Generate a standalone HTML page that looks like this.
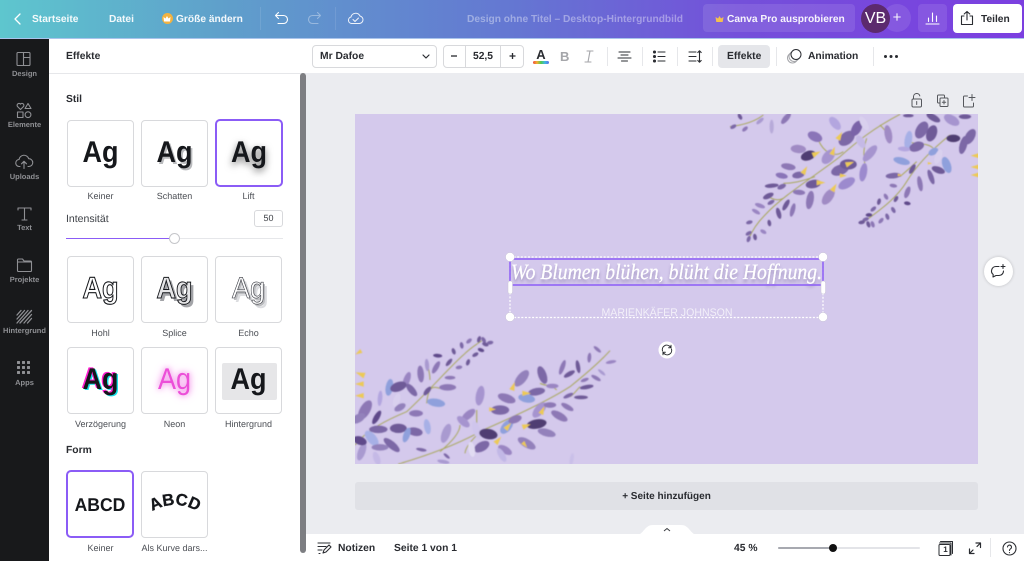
<!DOCTYPE html>
<html lang="de"><head><meta charset="utf-8"><title>Canva Editor</title>
<style>
*{box-sizing:border-box}
html,body{margin:0;padding:0;width:1024px;height:561px;overflow:hidden;background:#ebecf0;font-family:"Liberation Sans",sans-serif;color:#1b1d21;text-rendering:geometricPrecision}
body{filter:blur(.25px)}
.a{position:absolute}
.t{position:absolute;white-space:nowrap;line-height:1}
#top{left:0;top:0;width:1024px;height:39px;background:linear-gradient(90deg,#5ec6ce 0%,#5f9fcb 22%,#6477d2 50%,#7450da 72%,#7b3fe0 100%);border-bottom:1px solid #a9c4ec}
#top .t{color:#fff;font-size:10.2px;font-weight:bold;top:14.5px;opacity:.93}
#side{left:0;top:39px;width:49px;height:522px;background:#18191b}
.sl{position:absolute;left:0;width:49px;text-align:center;color:#8f9094;font-size:7.5px;line-height:9px;font-weight:bold;white-space:nowrap}
#panel{left:49px;top:39px;width:257px;height:522px;background:#fff}
.card{position:absolute;width:67px;height:67px;border:1px solid #d8d9dc;border-radius:4px;background:#fff;overflow:hidden}
.sel{border:2px solid #8b5cf6;border-radius:5px}
.ag{position:absolute;left:0;right:0;top:17px;text-align:center;font:bold 30px/30px "Liberation Sans",sans-serif;color:#15171b;transform:scaleX(.9)}
.lb{position:absolute;width:80px;text-align:center;font-size:9px;line-height:10px;color:#4c4f55;white-space:nowrap}
.h{position:absolute;font-size:10.3px;font-weight:bold;line-height:12px;color:#2a2c31}
.sep{position:absolute;top:47px;width:1px;height:19px;background:#e6e7ea}
svg.i{position:absolute;fill:none;stroke-linecap:round;stroke-linejoin:round}
</style></head><body>

<!-- canvas region -->
<div class="a" style="left:355px;top:114px;width:623px;height:350px;background:#d4c9ec"></div>

<!-- flowers -->
<svg class="a" style="left:0;top:0" width="1024" height="561" viewBox="0 0 1024 561">
<defs>
<ellipse id="p" cx="0" cy="0" rx="23" ry="14"/>
<ellipse id="b" cx="0" cy="0" rx="10" ry="5.5"/>
<path id="y" d="M-13 -8L13 0L-13 8Z"/>
<clipPath id="pg"><rect x="355" y="114" width="623" height="350"/></clipPath>
<filter id="sf"><feGaussianBlur stdDeviation=".4"/></filter>
</defs>
<g clip-path="url(#pg)" filter="url(#sf)">
<g transform="translate(700 85) scale(.33333)">
<g fill="none" stroke="#a9a85d" stroke-width="3">
<path d="M600 88C520 130 470 170 420 215C350 270 250 330 195 390C170 415 155 440 146 462"/>
<path d="M750 150C700 190 650 240 620 290C590 340 540 375 490 412"/>
<path d="M190 90C165 110 130 120 90 125"/>
<path d="M430 200C400 220 370 200 355 165M345 275C300 290 280 295 250 295M500 160C490 190 490 210 495 240M540 120C550 130 560 140 565 150M650 230C630 250 605 270 600 275M700 190C680 170 640 180 630 170M250 340C230 350 215 340 205 335"/>
</g>
<g fill="#8a75b8">
<use href="#p" transform="translate(345 155) rotate(25)"/>
<use href="#p" transform="translate(295 192) rotate(5) scale(1,.9)" fill="#a08bc4"/>
<use href="#p" transform="translate(325 212) rotate(-20)" fill="#4f3d72"/>
<use href="#p" transform="translate(265 245) rotate(10) scale(.95,.7)" fill="#8d78b5"/>
<use href="#p" transform="translate(245 272) rotate(12) scale(.8,.6)"/>
<use href="#p" transform="translate(295 270) rotate(-10) scale(.8,.7)" fill="#7c67a6"/>
<use href="#p" transform="translate(215 302) rotate(-5) scale(.9,.45)" fill="#6e5a97"/>
<use href="#p" transform="translate(245 305) rotate(-25) scale(.6,.5)" fill="#7c67a6"/>
<use href="#p" transform="translate(205 333) rotate(-25) scale(.75,.55)" fill="#6e5a97"/>
<use href="#p" transform="translate(297 322) rotate(5) scale(.8,.55)" fill="#8d78b5"/>
<use href="#p" transform="translate(180 362) rotate(20) scale(.7,.45)" fill="#9a85c2"/>
<use href="#p" transform="translate(213 352) rotate(-30) scale(.5,.4)" fill="#7c67a6"/>
<use href="#p" transform="translate(168 380) rotate(30) scale(.6,.4)" fill="#9a85c2"/>
<use href="#p" transform="translate(236 385) rotate(75) scale(.75,.5)" fill="#6e5a97"/>
<use href="#p" transform="translate(258 360) rotate(-60) scale(.8,.5)" fill="#6e5a97"/>
<use href="#p" transform="translate(278 375) rotate(-75) scale(.9,.5)" fill="#8d78b5"/>
<use href="#p" transform="translate(330 345) rotate(-80) scale(1.2,.8)" fill="#8d78b5"/>
<use href="#p" transform="translate(385 335) rotate(-55) scale(1.2,1)" fill="#a08bc4"/>
<use href="#p" transform="translate(340 297) rotate(-10) scale(1,.9)" fill="#6e5a97"/>
<use href="#p" transform="translate(385 215) rotate(-50) scale(1.1,1.1)" fill="#a694cf"/>
<use href="#p" transform="translate(440 160) rotate(-40) scale(1.2,1.3)" fill="#7c67a6"/>
<use href="#p" transform="translate(470 130) rotate(-60) scale(1.1,1)" fill="#7a64a8"/>
<use href="#p" transform="translate(405 115) rotate(50) scale(1,.9)" fill="#b3a6df"/>
<use href="#p" transform="translate(492 115) rotate(60) scale(1,.7)" fill="#d9d0ee"/>
<use href="#p" transform="translate(482 170) rotate(60) scale(.9,.8)" fill="#c5b9e6"/>
<use href="#p" transform="translate(420 255) rotate(-20) scale(1.2,1.1)" fill="#7c67a6"/>
<use href="#p" transform="translate(445 238) rotate(0) scale(1.1,1.1)" fill="#6e5a97"/>
<use href="#p" transform="translate(490 262) rotate(-80) scale(1.2,.8)" fill="#9c8ace"/>
<use href="#p" transform="translate(510 205) rotate(-50) scale(1.3,.9)" fill="#a694cf"/>
<use href="#p" transform="translate(565 148) rotate(80) scale(1.2,.8)" fill="#a08bc4"/>
<use href="#p" transform="translate(440 295) rotate(-30) scale(1.2,1)" fill="#9c8ace"/>
<use href="#p" transform="translate(625 92) scale(.7,.35)" fill="#6e5a97"/>
<use href="#p" transform="translate(258 100) rotate(-50) scale(.9,.6)" fill="#8d78b5"/>
<use href="#p" transform="translate(215 125) rotate(90) scale(.9,.45)" fill="#b7aad9"/>
<use href="#p" transform="translate(180 108) rotate(-40) scale(.6,.4)" fill="#a99ad0"/>
<use href="#b" transform="translate(148 412) rotate(-15)" fill="#7c67a6"/>
<use href="#b" transform="translate(208 414) rotate(80)" fill="#6e5a97"/>
<use href="#b" transform="translate(146 462) rotate(-70)" fill="#7c67a6"/>
<use href="#b" transform="translate(190 440) rotate(30)" fill="#9a85c2"/>
<use href="#b" transform="translate(165 456) rotate(80)" fill="#6e5a97"/>
<use href="#b" transform="translate(146 445) rotate(-30)" fill="#7c67a6"/>
<use href="#b" transform="translate(100 125) rotate(-30)" fill="#7c67a6"/>
<use href="#b" transform="translate(135 132) rotate(-40)" fill="#8d78b5"/>
<use href="#b" transform="translate(120 95) rotate(60)" fill="#6e5a97"/>

<use href="#p" transform="translate(700 98) rotate(30) scale(1,.7)" fill="#6e5a97"/>
<use href="#p" transform="translate(755 105) rotate(30) scale(1.1,1)" fill="#a694cf"/>
<use href="#p" transform="translate(795 95) scale(.8,.5)" fill="#6e5a97"/>
<use href="#p" transform="translate(665 135) rotate(-60) scale(1.2,1.2)" fill="#7c67a6"/>
<use href="#p" transform="translate(695 145) rotate(-70) scale(1.1,1.1)" fill="#6e5a97"/>
<use href="#p" transform="translate(625 165) rotate(-80) scale(1.2,.8)" fill="#a7b0e6"/>
<use href="#p" transform="translate(650 185) rotate(-20) scale(1,1)" fill="#7c67a6"/>
<use href="#p" transform="translate(700 200) rotate(-30) scale(.7,.7)" fill="#8fa0dc"/>
<use href="#p" transform="translate(760 160) rotate(0) scale(.9,.8)" fill="#4f3d72"/>
<use href="#p" transform="translate(810 155) rotate(-60) scale(1.1,1)" fill="#7c67a6"/>
<use href="#p" transform="translate(790 180) rotate(-75) scale(1.2,.8)" fill="#7c67a6"/>
<use href="#p" transform="translate(715 215) rotate(-70) scale(1,.7)" fill="#d9d0ee"/>
<use href="#p" transform="translate(605 228) rotate(15) scale(1.1,.75)" fill="#8fa0dc"/>
<use href="#p" transform="translate(612 192) rotate(5) scale(.8,.5)" fill="#b3a6df"/>
<use href="#p" transform="translate(580 272) rotate(-5) scale(1,.6)" fill="#7c67a6"/>
<use href="#p" transform="translate(637 252) rotate(-60) scale(.7,.5)" fill="#6e5a97"/>
<use href="#p" transform="translate(660 296) rotate(80) scale(1,.55)" fill="#8d78b5"/>
<use href="#p" transform="translate(693 276) rotate(70) scale(1,.55)" fill="#7c67a6"/>
<use href="#p" transform="translate(622 322) rotate(-70) scale(.8,.55)" fill="#8d78b5"/>
<use href="#p" transform="translate(580 302) rotate(10) scale(.5,.4)" fill="#8d78b5"/>
<use href="#p" transform="translate(740 240) rotate(70) scale(1.1,.9)" fill="#8fa0dc"/>
<use href="#p" transform="translate(715 255) rotate(20) scale(.9,.7)" fill="#6e5a97"/>
<use href="#b" transform="translate(622 355) rotate(10)" fill="#5f4a8a"/>
<use href="#b" transform="translate(588 342) rotate(-60)" fill="#6e5a97"/>
<use href="#b" transform="translate(580 375) rotate(60)" fill="#7c67a6"/>
<use href="#b" transform="translate(537 350) rotate(-75)" fill="#6e5a97"/>
<use href="#b" transform="translate(520 372) rotate(-40)" fill="#7c67a6"/>
<use href="#b" transform="translate(507 390) rotate(0)" fill="#5f4a8a"/>
<use href="#b" transform="translate(497 403) rotate(-20)" fill="#7c67a6"/>
<use href="#b" transform="translate(562 395) rotate(70)" fill="#7c67a6"/>
<use href="#b" transform="translate(543 407) rotate(-50)" fill="#8d78b5"/>
<use href="#b" transform="translate(485 412) rotate(-10)" fill="#6e5a97"/>
<use href="#b" transform="translate(505 418) rotate(70)" fill="#6e5a97"/>
<use href="#b" transform="translate(518 418) rotate(70)" fill="#8d78b5"/>
<use href="#b" transform="translate(558 335) rotate(60)" fill="#8d78b5"/>
</g>
<g fill="#ecc957">
<use href="#y" transform="translate(350 205) rotate(-25)"/>
<use href="#y" transform="translate(400 197) rotate(-70)"/>
<use href="#y" transform="translate(315 255) rotate(-60)"/>
<use href="#y" transform="translate(363 293)"/>
<use href="#y" transform="translate(403 307) rotate(-60)"/>
<use href="#y" transform="translate(450 235) rotate(-20)"/>
<use href="#y" transform="translate(420 152) rotate(-60)"/>
<use href="#y" transform="translate(430 272) scale(.8)"/>
<use href="#y" transform="translate(825 212) rotate(180)"/>
<use href="#y" transform="translate(825 246) rotate(180)"/>
<use href="#y" transform="translate(825 270) rotate(180)"/>
<use href="#y" transform="translate(690 235) scale(.5)"/>
<use href="#y" transform="translate(600 270) scale(.5)"/>
</g>
</g>
<g transform="translate(350 330) scale(.33333)">
<g fill="none" stroke="#a9a85d" stroke-width="3">
<path d="M145 402C220 380 320 345 400 300C480 265 590 215 660 170C710 130 750 95 780 62"/>
<path d="M15 345C50 300 110 270 170 245C240 180 300 110 340 75C365 50 385 40 395 32"/>
<path d="M400 300C370 320 345 355 345 370M270 365C300 340 330 310 330 285M380 240V300M620 180C600 160 590 170 570 160M690 170C680 180 670 195 660 200M240 150C240 130 235 120 235 110M270 175C250 170 235 165 230 220"/>
</g>
<g>
<use href="#p" transform="translate(515 145) rotate(-50) scale(1.3,1)" fill="#9381bb"/>
<use href="#p" transform="translate(577 135) rotate(70) scale(1.2,.9)" fill="#7c67a6"/>
<use href="#p" transform="translate(637 112) rotate(-70) scale(1,.5)" fill="#8d78b5"/>
<use href="#p" transform="translate(658 132) rotate(-30) scale(.8,.5)" fill="#6e5a97"/>
<use href="#p" transform="translate(684 110) rotate(80) scale(.85,.45)" fill="#6e5a97"/>
<use href="#p" transform="translate(718 83) rotate(-85) scale(.65,.4)" fill="#8d78b5"/>
<use href="#p" transform="translate(742 58) rotate(40) scale(.6,.35)" fill="#8d78b5"/>
<use href="#p" transform="translate(783 96) rotate(-10) scale(.7,.35)" fill="#9a85c2"/>
<use href="#p" transform="translate(755 127) rotate(40) scale(.6,.3)" fill="#a99ad0"/>
<use href="#p" transform="translate(738 144) rotate(30) scale(.7,.4)" fill="#8d78b5"/>
<use href="#p" transform="translate(704 150) rotate(-20) scale(.55,.35)" fill="#8d78b5"/>
<use href="#p" transform="translate(710 171) rotate(-10) scale(.9,.45)" fill="#6e5a97"/>
<use href="#p" transform="translate(693 202) rotate(0) scale(.9,.4)" fill="#6e5a97"/>
<use href="#p" transform="translate(655 197) rotate(-25) scale(.7,.4)" fill="#7c67a6"/>
<use href="#p" transform="translate(652 231) rotate(30) scale(.9,.55)" fill="#8d78b5"/>
<use href="#p" transform="translate(607 168) rotate(0) scale(.8,.5)" fill="#9a85c2"/>
<use href="#p" transform="translate(628 258) rotate(30) scale(1.2,.8)" fill="#8d78b5"/>
<use href="#p" transform="translate(590 308) rotate(15) scale(1.2,.8)" fill="#9381bb"/>
<use href="#p" transform="translate(560 282) rotate(-10) scale(1.3,1)" fill="#4f3d72"/>
<use href="#p" transform="translate(568 240) rotate(-50) scale(1.2,1)" fill="#a694cf"/>
<use href="#p" transform="translate(600 225) rotate(0) scale(.8,.6)" fill="#8d78b5"/>
<use href="#p" transform="translate(560 185) rotate(-10) scale(1.1,.8)" fill="#7c67a6"/>
<use href="#p" transform="translate(530 205) rotate(10) scale(1.1,.9)" fill="#8fa0dc"/>
<use href="#p" transform="translate(450 240) rotate(0) scale(1.2,1)" fill="#7c67a6"/>
<use href="#p" transform="translate(470 205) rotate(20) scale(1.2,.9)" fill="#8d78b5"/>
<use href="#p" transform="translate(390 197) rotate(-80) scale(1.3,.9)" fill="#a694cf"/>
<use href="#p" transform="translate(355 255) rotate(-40) scale(1.1,.8)" fill="#9a85c2"/>
<use href="#p" transform="translate(340 275) rotate(40) scale(1,.8)" fill="#a694cf"/>
<use href="#p" transform="translate(288 310) rotate(-70) scale(1.3,.9)" fill="#a99ad0"/>
<use href="#p" transform="translate(380 300) rotate(70) scale(1.2,.8)" fill="#cfc5ec"/>
<use href="#p" transform="translate(415 312) rotate(10) scale(1.2,1.1)" fill="#4f3d72"/>
<use href="#p" transform="translate(470 290) rotate(-50) scale(1.1,1)" fill="#8fa0dc"/>
<use href="#p" transform="translate(495 268) rotate(-20) scale(.9,.8)" fill="#8d78b5"/>
<use href="#p" transform="translate(395 350) rotate(-30) scale(1.1,1)" fill="#7c67a6"/>
<use href="#p" transform="translate(365 358) rotate(80) scale(1,.7)" fill="#e1dbf2"/>
<use href="#p" transform="translate(465 360) rotate(30) scale(1,.8)" fill="#9a85c2"/>
<use href="#p" transform="translate(455 375) rotate(60) scale(1,.7)" fill="#c2b8e6"/>
<use href="#p" transform="translate(530 340) rotate(30) scale(1.3,.9)" fill="#9381bb"/>
<use href="#p" transform="translate(280 395) rotate(10) scale(.8,.4)" fill="#a99ad0"/>
<use href="#p" transform="translate(665 388) rotate(-80) scale(.8,.4)" fill="#c9bfe8"/>
<use href="#p" transform="translate(214 359) rotate(10) scale(.7,.35)" fill="#7c67a6"/>
<use href="#p" transform="translate(290 378) rotate(40) scale(.5,.3)" fill="#7c67a6"/>

<use href="#p" transform="translate(263 77) rotate(5) scale(.6,.4)" fill="#5f4a8a"/>
<use href="#b" transform="translate(311 64) rotate(70)" fill="#6e5a97"/>
<use href="#b" transform="translate(335 46) rotate(80)" fill="#7c67a6"/>
<use href="#b" transform="translate(357 33) rotate(-40)" fill="#8d78b5"/>
<use href="#b" transform="translate(387 28) rotate(-70)" fill="#6e5a97"/>
<use href="#b" transform="translate(401 30) rotate(60)" fill="#7c67a6"/>
<use href="#b" transform="translate(406 43) rotate(20)" fill="#6e5a97"/>
<use href="#b" transform="translate(420 38) rotate(-10)" fill="#7c67a6"/>
<use href="#b" transform="translate(393 60) rotate(20)" fill="#5f4a8a"/>
<use href="#b" transform="translate(376 74) rotate(-30)" fill="#6e5a97"/>
<use href="#b" transform="translate(354 97) rotate(-70)" fill="#6e5a97"/>
<use href="#b" transform="translate(327 112) rotate(-10)" fill="#8d78b5"/>
<use href="#p" transform="translate(297 97) rotate(-50) scale(.6,.4)" fill="#6e5a97"/>
<use href="#p" transform="translate(258 112) rotate(-60) scale(.9,.55)" fill="#8d78b5"/>
<use href="#p" transform="translate(231 105) rotate(85) scale(.8,.45)" fill="#a99ad0"/>
<use href="#p" transform="translate(212 132) rotate(85) scale(1.1,.7)" fill="#8d78b5"/>
<use href="#p" transform="translate(170 150) rotate(-70) scale(1.1,.7)" fill="#9a85c2"/>
<use href="#p" transform="translate(300 143) scale(.7,.4)" fill="#8d78b5"/>
<use href="#p" transform="translate(293 172) rotate(0) scale(1.1,.7)" fill="#8d78b5"/>
<use href="#p" transform="translate(232 183) rotate(-50) scale(.7,.5)" fill="#6e5a97"/>
<use href="#p" transform="translate(258 218) rotate(10) scale(1.2,.85)" fill="#8fa0dc"/>
<use href="#p" transform="translate(150 232) rotate(-30) scale(.8,.7)" fill="#9381bb"/>
<use href="#p" transform="translate(140 210) rotate(-70) scale(.9,.7)" fill="#d9d0ee"/>
<use href="#p" transform="translate(118 172) rotate(-80) scale(1.1,.8)" fill="#8fa0dc"/>
<use href="#p" transform="translate(145 170) rotate(-20) scale(1.1,1)" fill="#6e5a97"/>
<use href="#p" transform="translate(90 205) rotate(-85) scale(1,.5)" fill="#b3a6df"/>
<use href="#p" transform="translate(185 180) rotate(50) scale(1,.7)" fill="#7c67a6"/>
<use href="#p" transform="translate(80 262) rotate(-60) scale(1,.6)" fill="#5f4a8a"/>
<use href="#p" transform="translate(45 240) rotate(-60) scale(1.4,1.1)" fill="#8d78b5"/>
<use href="#p" transform="translate(25 265) rotate(-30) scale(1,.9)" fill="#9381bb"/>
<use href="#p" transform="translate(145 295) rotate(0) scale(1.1,1)" fill="#6e5a97"/>
<use href="#p" transform="translate(198 250) scale(.9,.7)" fill="#8d78b5"/>
<use href="#p" transform="translate(195 305) rotate(10) scale(1,.9)" fill="#7c67a6"/>
<use href="#p" transform="translate(232 290) rotate(80) scale(1,.7)" fill="#a7b0e6"/>
<use href="#p" transform="translate(170 315) rotate(-70) scale(1,.7)" fill="#8fa0dc"/>
<use href="#p" transform="translate(85 298) rotate(0) scale(1.2,.8)" fill="#7c67a6"/>
<use href="#p" transform="translate(65 325) rotate(50) scale(1.2,1)" fill="#a7b0e6"/>
<use href="#p" transform="translate(125 345) rotate(40) scale(1.3,.8)" fill="#7c67a6"/>
<use href="#p" transform="translate(90 352) rotate(0) scale(1.1,.7)" fill="#9381bb"/>
<use href="#p" transform="translate(35 365) rotate(-70) scale(1.2,.8)" fill="#a99ad0"/>
<use href="#p" transform="translate(30 332) rotate(20) scale(.9,.9)" fill="#5f4a8a"/>
<use href="#p" transform="translate(80 385) rotate(70) scale(.9,.7)" fill="#c5b9e6"/>
</g>
<g fill="#ecc957">
<use href="#y" transform="translate(25 68) rotate(150) scale(.8)"/>
<use href="#y" transform="translate(30 132) rotate(200) scale(1.1)"/>
<use href="#y" transform="translate(28 162) rotate(180)"/>
<use href="#y" transform="translate(28 197) rotate(180)"/>
<use href="#y" transform="translate(490 168) rotate(-70)"/>
<use href="#y" transform="translate(530 190)"/>
<use href="#y" transform="translate(428 238) rotate(0) scale(.8)"/>
<use href="#y" transform="translate(475 288) rotate(-50)"/>
<use href="#y" transform="translate(530 287) rotate(-20)"/>
<use href="#y" transform="translate(578 240) rotate(-65)"/>
<use href="#y" transform="translate(445 330) rotate(-50)"/>
<use href="#y" transform="translate(525 345) rotate(50) scale(.8)"/>
</g>
</g>
</g>
</svg>

<!-- Selection -->
<svg class="a" style="left:0;top:0" width="1024" height="561" viewBox="0 0 1024 561">
<defs><filter id="ts" x="-5%" y="-30%" width="110%" height="170%"><feGaussianBlur stdDeviation="1.6"/></filter></defs>
<text x="511" y="282" textLength="311" lengthAdjust="spacingAndGlyphs" font-family="'Liberation Serif',serif" font-style="italic" font-size="22" fill="#6b5a90" opacity=".55" filter="url(#ts)">Wo Blumen blühen, blüht die Hoffnung.</text>
<text x="511" y="279" textLength="311" lengthAdjust="spacingAndGlyphs" font-family="'Liberation Serif',serif" font-style="italic" font-size="22" fill="#fff" stroke="#fff" stroke-width=".25">Wo Blumen blühen, blüht die Hoffnung.</text>
<text x="667" y="316" text-anchor="middle" textLength="131" lengthAdjust="spacingAndGlyphs" font-family="'Liberation Sans',sans-serif" font-size="11" fill="#fff" opacity=".7">MARIENKÄFER JOHNSON</text>
<rect x="510" y="257" width="313" height="60.5" fill="none" stroke="#fff" stroke-width="1.2" stroke-dasharray="2 1.6"/>
<rect x="510" y="259" width="313" height="26" fill="none" stroke="#8b5cf6" stroke-width="1.5"/>
<g fill="#fff" stroke="#c9c5d6" stroke-width=".5">
<circle cx="510" cy="257" r="4.5"/><circle cx="823" cy="257" r="4.5"/><circle cx="510" cy="317" r="4.5"/><circle cx="823" cy="317" r="4.5"/>
<rect x="508" y="281" width="4.5" height="13" rx="2"/><rect x="821" y="281" width="4.5" height="13" rx="2"/>
<circle cx="667" cy="350" r="8.5" stroke="none"/>
</g>
<g fill="none" stroke="#2a2c31" stroke-width="1" stroke-linecap="round">
<path d="M662.5 351a4.5 4.5 0 0 1 7.5-4.5l1 1M671.5 349a4.5 4.5 0 0 1-7.5 4.5l-1-1M671 345.3v2.4h-2.4M663 354.7v-2.4h2.4"/>
</g>
</svg>

<!-- page actions -->
<svg class="i" style="left:910px;top:93px" width="66" height="15" viewBox="0 0 66 15" stroke="#55575c" stroke-width="1">
<rect x="2" y="6" width="9.5" height="8" rx="1.2"/><path d="M3.5 6V3.5a3.2 3.2 0 0 1 6.3 -.6M6.7 8.5v3"/>
<rect x="27.5" y="2" width="7" height="8" rx="1"/><rect x="30" y="5" width="8" height="8.5" rx="1" fill="#ebecf0"/><path d="M34 7.5v3.5M32.3 9.2h3.4"/>
<path d="M57.5 3h-3a1 1 0 0 0-1 1v9a1 1 0 0 0 1 1h8a1 1 0 0 0 1-1v-3M62 1.5v6M59 4.5h6"/>
</svg>

<!-- comment fab -->
<div class="a" style="left:984px;top:257px;width:29px;height:29px;border-radius:50%;background:#fff;box-shadow:0 0 3px rgba(0,0,0,.2)"></div>
<svg class="i" style="left:990px;top:263px" width="17" height="17" viewBox="0 0 17 17" stroke="#2a2c31" stroke-width="1.1">
<path d="M9 3.5H6a4.5 4.5 0 0 0-2.8 8L3 14l3-1.5h3a4.5 4.5 0 0 0 4.5-4.5M13 1.5v4M11 3.5h4"/>
</svg>

<!-- add page -->
<div class="a" style="left:355px;top:482px;width:623px;height:28px;background:#e0e1e6;border-radius:3px"></div>
<div class="t" style="left:355px;width:623px;top:491.5px;text-align:center;font-size:10px;font-weight:bold;color:#2a2c31">+ Seite hinzufügen</div>

<!-- bottom bar -->
<div class="a" style="left:306px;top:534px;width:718px;height:27px;background:#fff"></div>
<svg class="a" style="left:636px;top:524px" width="62" height="11" viewBox="0 0 62 11"><path d="M0 11C8 11 8 1 17 1H45C54 1 54 11 62 11Z" fill="#fff"/><path d="M28 7l3-2.5 3 2.5" fill="none" stroke="#3a3c41" stroke-width="1"/></svg>
<svg class="i" style="left:317px;top:541px" width="15" height="14" viewBox="0 0 15 14" stroke="#2a2c31" stroke-width="1.1">
<path d="M1 2h12M1 5.5h8M1 9h4M2 12.5h1M6 12l1-3 5-5 2 2-5 5z"/></svg>
<div class="t" style="left:338px;top:543.5px;font-size:10.3px;font-weight:bold;color:#2a2c31">Notizen</div>
<div class="t" style="left:394px;top:543.5px;font-size:10.3px;font-weight:bold;color:#2a2c31">Seite 1 von 1</div>
<div class="t" style="left:734px;top:543.5px;font-size:10.3px;font-weight:bold;color:#2a2c31">45 %</div>
<div class="a" style="left:778px;top:547px;width:142px;height:2px;background:#e3e4e8;border-radius:1px"></div>
<div class="a" style="left:778px;top:547px;width:55px;height:2px;background:#a7a9b0;border-radius:1px"></div>
<div class="a" style="left:829px;top:544px;width:8px;height:8px;border-radius:50%;background:#111"></div>
<svg class="i" style="left:937px;top:539px" width="18" height="18" viewBox="0 0 18 18" stroke="#2a2c31" stroke-width="1">
<path d="M3.5 2.5h12v12"/><path d="M2.5 4h11.5v12"/><rect x="2" y="5.5" width="11" height="11" rx="1"/></svg>
<div class="t" style="left:940px;top:546px;width:11px;text-align:center;font-size:8px;color:#2a2c31;font-weight:bold">1</div>
<svg class="i" style="left:968px;top:541px" width="14" height="14" viewBox="0 0 14 14" stroke="#2a2c31" stroke-width="1.2">
<path d="M8 2h4.5v4.5M12.5 2L9 5.5M1.5 8v4.5H6M1.5 12.5L5 9"/></svg>
<div class="a" style="left:990px;top:538px;width:1px;height:19px;background:#e6e7ea"></div>
<svg class="i" style="left:1002px;top:541px" width="15" height="15" viewBox="0 0 15 15" stroke="#2a2c31" stroke-width="1.1">
<circle cx="7.5" cy="7.5" r="6.5"/><path d="M5.5 6a2 2 0 1 1 3 1.8c-.7.4-1 .8-1 1.7M7.5 11.5v.2"/></svg>

<!-- toolbar -->
<div class="a" style="left:306px;top:39px;width:718px;height:34px;background:#fff"></div>
<div class="a" style="left:312px;top:45px;width:125px;height:23px;background:#fff;border:1px solid #d8d9dc;border-radius:4px"></div>
<div class="t" style="left:320px;top:51.5px;font-size:10.3px;font-weight:bold;color:#2a2c31">Mr Dafoe</div>
<svg class="i" style="left:421px;top:53px" width="10" height="8" viewBox="0 0 10 8" stroke="#2a2c31" stroke-width="1.2"><path d="M2 2l3 3 3-3"/></svg>
<div class="a" style="left:443px;top:45px;width:81px;height:23px;background:#fff;border:1px solid #d8d9dc;border-radius:4px"></div>
<div class="a" style="left:465px;top:45px;width:1px;height:23px;background:#d8d9dc"></div>
<div class="a" style="left:500px;top:45px;width:1px;height:23px;background:#d8d9dc"></div>
<div class="t" style="left:443px;width:22px;top:50px;text-align:center;font-size:12px;font-weight:bold;color:#2a2c31">−</div>
<div class="t" style="left:466px;width:34px;top:51.5px;text-align:center;font-size:10.3px;font-weight:bold;color:#2a2c31">52,5</div>
<div class="t" style="left:501px;width:23px;top:50px;text-align:center;font-size:12px;font-weight:bold;color:#2a2c31">+</div>
<div class="t" style="left:532px;width:18px;top:48px;text-align:center;font-size:13px;font-weight:bold;color:#2a2c31">A</div>
<div class="a" style="left:533px;top:60.5px;width:16px;height:3px;border-radius:1.5px;background:linear-gradient(90deg,#ef4a3c,#f0b030,#4fc94f,#3fb6e6,#5b6ee8)"></div>
<div class="t" style="left:560px;top:50px;font-size:13px;font-weight:bold;color:#a5a6aa">B</div>
<svg class="i" style="left:583px;top:49px" width="12" height="15" viewBox="0 0 12 15" stroke="#a5a6aa" stroke-width="1.1"><path d="M4 2h6M2 13h6M7 2L5 13"/></svg>
<div class="sep" style="left:607px"></div>
<svg class="i" style="left:617px;top:49px" width="15" height="15" viewBox="0 0 15 15" stroke="#2a2c31" stroke-width="1.1"><path d="M2 3h11M4 6h7M1 9h13M4.5 12h6"/></svg>
<div class="sep" style="left:642px"></div>
<svg class="i" style="left:652px;top:49px" width="15" height="15" viewBox="0 0 15 15" stroke="#2a2c31" stroke-width="1.1"><path d="M6 3h7M6 7.5h7M6 12h7"/><circle cx="2.5" cy="3" r="1" fill="#2a2c31"/><circle cx="2.5" cy="7.5" r="1" fill="#2a2c31"/><circle cx="2.5" cy="12" r="1" fill="#2a2c31"/></svg>
<div class="sep" style="left:677px"></div>
<svg class="i" style="left:688px;top:49px" width="15" height="15" viewBox="0 0 15 15" stroke="#2a2c31" stroke-width="1.1"><path d="M1 3h7M1 7.5h7M1 12h7M11.5 2v11M9.8 3.5l1.7-1.7 1.7 1.7M9.8 11.5l1.7 1.7 1.7-1.7"/></svg>
<div class="sep" style="left:712px"></div>
<div class="a" style="left:718px;top:45px;width:52px;height:23px;background:#e5e6ea;border-radius:4px"></div>
<div class="t" style="left:727px;top:51.5px;font-size:10.3px;font-weight:bold;color:#2a2c31">Effekte</div>
<div class="sep" style="left:776px"></div>
<svg class="i" style="left:786px;top:48px" width="17" height="16" viewBox="0 0 17 16" stroke="#a5a6aa" stroke-width="1"><circle cx="6.5" cy="10" r="5"/><circle cx="8" cy="8.5" r="5"/><circle cx="10" cy="6.5" r="5" fill="#fff" stroke="#2a2c31"/></svg>
<div class="t" style="left:808px;top:51.5px;font-size:10.3px;font-weight:bold;color:#2a2c31">Animation</div>
<div class="sep" style="left:873px"></div>
<div class="a" style="left:884px;top:54.5px;width:3px;height:3px;border-radius:50%;background:#2a2c31;box-shadow:5.5px 0 #2a2c31,11px 0 #2a2c31"></div>

<!-- top bar -->
<div class="a" id="top">
<svg class="i" style="left:13px;top:12px" width="9" height="14" viewBox="0 0 9 14" stroke="#fff" stroke-width="1.3"><path d="M7 2L2 7l5 5"/></svg>
<div class="t" style="left:32px">Startseite</div>
<div class="t" style="left:109px">Datei</div>
<div class="a" style="left:161.5px;top:13px;width:11px;height:11px;border-radius:50%;background:#f3b23f"></div>
<svg class="a" style="left:163px;top:14.5px" width="8" height="8" viewBox="0 0 8 8"><path d="M1 6.5L.5 2 2.5 3.5 4 1l1.500 2.500L7.500 2 7 6.500z" fill="#fff"/></svg>
<div class="t" style="left:176px">Größe ändern</div>
<div class="a" style="left:260px;top:7px;width:1px;height:23px;background:rgba(255,255,255,.1)"></div>
<svg class="i" style="left:274px;top:11px" width="15" height="15" viewBox="0 0 15 15" stroke="#fff" stroke-width="1.1"><path d="M4.5 1.5L1.500 4.500l3 3M1.500 4.500h8a4 4 0 0 1 0 8H4"/></svg>
<svg class="i" style="left:307px;top:11px;opacity:.35" width="15" height="15" viewBox="0 0 15 15" stroke="#fff" stroke-width="1.1"><path d="M10.500 1.500l3 3-3 3M13.500 4.500h-8a4 4 0 0 0 0 8H11"/></svg>
<div class="a" style="left:335px;top:7px;width:1px;height:23px;background:rgba(255,255,255,.1)"></div>
<svg class="i" style="left:347px;top:11px" width="17" height="15" viewBox="0 0 17 15" stroke="#fff" stroke-width="1" opacity=".9"><path d="M4.500 12.500a3.300 3.300 0 0 1-.500-6.500 4.800 4.800 0 0 1 9-1 3.800 3.800 0 0 1-.500 7.500zM6 8.500l2 2 3.500-3.500"/></svg>
<div class="t" style="left:467px;opacity:.38;color:#fff;font-weight:bold">Design ohne Titel – Desktop-Hintergrundbild</div>
<div class="a" style="left:703px;top:4px;width:152px;height:28px;border-radius:4px;background:rgba(255,255,255,.1)"></div>
<svg class="a" style="left:715px;top:14.5px" width="9" height="8" viewBox="0 0 9 8"><path d="M1.300 7L.5 2 3 3.500 4.500 1 6 3.500 8.500 2 7.700 7z" fill="#f3c04f"/></svg>
<div class="t" style="left:727px">Canva Pro ausprobieren</div>
<div class="a" style="left:883px;top:4px;width:28px;height:28px;border-radius:50%;background:rgba(255,255,255,.1)"></div>
<div class="a" style="left:861px;top:4px;width:29px;height:29px;border-radius:50%;background:#5c2a6e"></div>
<div class="t" style="left:861px;width:29px;top:10.5px;text-align:center;font-size:16px;font-weight:normal;opacity:1">VB</div>
<div class="t" style="left:883px;width:28px;top:10px;text-align:center;font-size:15px;font-weight:normal">+</div>
<div class="a" style="left:918px;top:4px;width:29px;height:28px;border-radius:4px;background:rgba(255,255,255,.1)"></div>
<svg class="i" style="left:925px;top:11px" width="15" height="14" viewBox="0 0 15 14" stroke="#fff" stroke-width="1.1"><path d="M1 13h13M3.500 10.500V7M7.500 10.500V2M11.500 10.500V5"/></svg>
<div class="a" style="left:953px;top:4px;width:69px;height:29px;border-radius:4px;background:#fff"></div>
<svg class="i" style="left:959px;top:10px" width="16" height="16" viewBox="0 0 16 16" stroke="#2a2c31" stroke-width="1.1"><path d="M5 6H2.500v8.500h11V6H11M8 10V1.500M5.200 4L8 1.500 10.800 4"/></svg>
<div class="t" style="left:981px;color:#2a2c31;opacity:1">Teilen</div>
</div>

<!-- sidebar -->
<div class="a" id="side">
<svg class="i" style="left:15px;top:12px" width="19" height="100" viewBox="0 0 19 100" stroke="#8f9094" stroke-width="1.1">
<rect x="2" y="1.500" width="13" height="13" rx="1"/><path d="M8.500 1.500v13M8.500 6.500H15"/>
<path d="M5.500 58.500l-3-3a1.800 1.800 0 0 1 3-2.300 1.800 1.800 0 0 1 3 2.300zM13 52.500l3 5h-6zM2.500 61h5.500v5.500H2.500z"/><circle cx="13" cy="63.700" r="2.900"/>
</svg>
<svg class="i" style="left:15px;top:114px" width="19" height="18" viewBox="0 0 19 18" stroke="#8f9094" stroke-width="1.1">
<path d="M5 13.500h-.500a3.500 3.500 0 0 1-.500-7 5 5 0 0 1 9.700-.800 3.800 3.800 0 0 1 .300 7.800H13M9 15.500V8.500M6.500 10.800L9 8.300l2.500 2.500"/></svg>
<svg class="i" style="left:15px;top:166px" width="19" height="18" viewBox="0 0 19 18" stroke="#8f9094" stroke-width="1.1">
<path d="M3 5V3h13v2M9.500 3v12M7 15h5"/></svg>
<svg class="i" style="left:15px;top:218px" width="19" height="17" viewBox="0 0 19 17" stroke="#8f9094" stroke-width="1.1">
<path d="M2.500 5V3a1 1 0 0 1 1-1h4l1.500 2h6.500a1 1 0 0 1 1 1v8.500a1 1 0 0 1-1 1h-12a1 1 0 0 1-1-1V5h14"/></svg>
<svg class="i" style="left:16px;top:270px" width="17" height="15" viewBox="0 0 17 15" stroke="#8f9094" stroke-width="1.3">
<path d="M1 6L5 1.500M1 10L8.500 1.500M1 14L12 1.500M4 14L15.500 1.500M8 14L15.500 5.500M11.500 14L15.500 9.500"/></svg>
<svg class="a" style="left:17px;top:322px" width="14" height="14" viewBox="0 0 14 14" fill="#8f9094">
<rect x="0" y="0" width="3" height="3" rx=".6"/><rect x="5" y="0" width="3" height="3" rx=".6"/><rect x="10" y="0" width="3" height="3" rx=".6"/>
<rect x="0" y="5" width="3" height="3" rx=".6"/><rect x="5" y="5" width="3" height="3" rx=".6"/><rect x="10" y="5" width="3" height="3" rx=".6"/>
<rect x="0" y="10" width="3" height="3" rx=".6"/><rect x="5" y="10" width="3" height="3" rx=".6"/><rect x="10" y="10" width="3" height="3" rx=".6"/></svg>
<div class="sl" style="top:30px">Design</div>
<div class="sl" style="top:81px">Elemente</div>
<div class="sl" style="top:133px">Uploads</div>
<div class="sl" style="top:184px">Text</div>
<div class="sl" style="top:236px">Projekte</div>
<div class="sl" style="top:287px">Hintergrund</div>
<div class="sl" style="top:339px">Apps</div>
</div>

<!-- panel -->
<div class="a" id="panel"></div>
<div class="a" style="left:49px;top:73px;width:257px;height:1px;background:#e6e7ea"></div>
<div class="h" style="left:66px;top:51px">Effekte</div>
<div class="h" style="left:66px;top:94px">Stil</div>

<div class="card" style="left:67px;top:119.5px"><div class="ag">Ag</div></div>
<div class="card" style="left:141px;top:119.5px"><div class="ag" style="text-shadow:2px 2px 0 #b9babd">Ag</div></div>
<div class="card sel" style="left:215px;top:119px;width:68px;height:68px"><div class="ag" style="top:17px;text-shadow:0 3px 8px rgba(0,0,0,.55)">Ag</div></div>
<div class="lb" style="left:60.5px;top:191px">Keiner</div>
<div class="lb" style="left:134.5px;top:191px">Schatten</div>
<div class="lb" style="left:208.5px;top:191px">Lift</div>

<div class="t" style="left:66px;top:213.5px;font-size:10.5px;color:#3d4046">Intensität</div>
<div class="a" style="left:254px;top:210px;width:29px;height:17px;border:1px solid #d8d9dc;border-radius:3px;background:#fff"></div>
<div class="t" style="left:254px;width:29px;top:214px;text-align:center;font-size:9px;color:#3d4046">50</div>
<div class="a" style="left:66px;top:237.5px;width:217px;height:1.5px;background:#e6e7ea"></div>
<div class="a" style="left:66px;top:237.5px;width:108px;height:1.5px;background:#8b5cf6"></div>
<div class="a" style="left:168.5px;top:232.5px;width:11px;height:11px;border-radius:50%;background:#fff;border:1px solid #c5c6ca"></div>

<div class="card" style="left:67px;top:256px"><div class="ag" style="color:#fff;-webkit-text-stroke:1.1px #15171b">Ag</div></div>
<div class="card" style="left:141px;top:256px"><div class="ag" style="color:#e6e6e8;-webkit-text-stroke:1px #15171b;text-shadow:3px 3px 0 #a3a4a8">Ag</div></div>
<div class="card" style="left:215px;top:256px"><div class="ag" style="font-weight:normal;color:#fff;-webkit-text-stroke:.6px #30323a;text-shadow:2px 2px 0 #bcbdc0,4px 4px 0 #dcdde0">Ag</div></div>
<div class="lb" style="left:60.5px;top:328px">Hohl</div>
<div class="lb" style="left:134.5px;top:328px">Splice</div>
<div class="lb" style="left:208.5px;top:328px">Echo</div>

<div class="card" style="left:67px;top:346.5px"><div class="ag" style="color:#15171b;text-shadow:-1.5px -1px 0 #ff1fd0,1.5px 1px 0 #18e0e8">Ag</div></div>
<div class="card" style="left:141px;top:346.5px"><div class="ag" style="font-weight:normal;color:#ec4fd8;text-shadow:0 0 6px #f08ae6,0 0 10px #f4a6ee">Ag</div></div>
<div class="card" style="left:215px;top:346.5px"><div class="a" style="left:5.5px;top:15px;width:55px;height:37px;border-radius:2px;background:#e6e6e8"></div><div class="ag">Ag</div></div>
<div class="lb" style="left:60.5px;top:419px">Verzögerung</div>
<div class="lb" style="left:134.5px;top:419px">Neon</div>
<div class="lb" style="left:208.5px;top:419px">Hintergrund</div>

<div class="h" style="left:66px;top:445px">Form</div>
<div class="card sel" style="left:66px;top:470px;width:68px;height:68px"><div class="t" style="left:0;right:0;top:23px;text-align:center;font:bold 18.5px/20px 'Liberation Sans',sans-serif;color:#15171b;transform:scaleX(.95)">ABCD</div></div>
<div class="card" style="left:141px;top:470.5px">
<svg class="a" style="left:0;top:0" width="65" height="65" viewBox="0 0 65 65"><defs><path id="arc" d="M6 42Q33 24 60 42"/></defs><text font-family="'Liberation Sans',sans-serif" font-weight="bold" font-size="16.5" fill="#15171b" stroke="#15171b" stroke-width=".3"><textPath href="#arc" startOffset="50%" text-anchor="middle">ABCD</textPath></text></svg>
</div>
<div class="lb" style="left:60.5px;top:543px">Keiner</div>
<div class="lb" style="left:134.5px;top:543px">Als Kurve dars...</div>

<div class="a" style="left:300px;top:73px;width:6px;height:480px;border-radius:3px;background:#7d7e82"></div>
</body></html>
